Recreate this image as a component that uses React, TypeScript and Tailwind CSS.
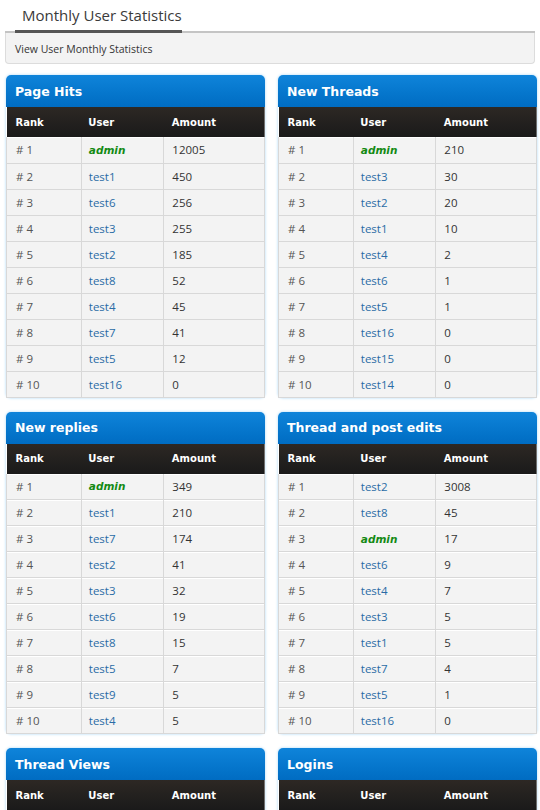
import React from "react";

type Row = { user: string; amount: number };

const stats: { title: string; rows: Row[] }[] = [
  {
    title: "Page Hits",
    rows: [
      { user: "admin", amount: 12005 },
      { user: "test1", amount: 450 },
      { user: "test6", amount: 256 },
      { user: "test3", amount: 255 },
      { user: "test2", amount: 185 },
      { user: "test8", amount: 52 },
      { user: "test4", amount: 45 },
      { user: "test7", amount: 41 },
      { user: "test5", amount: 12 },
      { user: "test16", amount: 0 },
    ],
  },
  {
    title: "New Threads",
    rows: [
      { user: "admin", amount: 210 },
      { user: "test3", amount: 30 },
      { user: "test2", amount: 20 },
      { user: "test1", amount: 10 },
      { user: "test4", amount: 2 },
      { user: "test6", amount: 1 },
      { user: "test5", amount: 1 },
      { user: "test16", amount: 0 },
      { user: "test15", amount: 0 },
      { user: "test14", amount: 0 },
    ],
  },
  {
    title: "New replies",
    rows: [
      { user: "admin", amount: 349 },
      { user: "test1", amount: 210 },
      { user: "test7", amount: 174 },
      { user: "test2", amount: 41 },
      { user: "test3", amount: 32 },
      { user: "test6", amount: 19 },
      { user: "test8", amount: 15 },
      { user: "test5", amount: 7 },
      { user: "test9", amount: 5 },
      { user: "test4", amount: 5 },
    ],
  },
  {
    title: "Thread and post edits",
    rows: [
      { user: "test2", amount: 3008 },
      { user: "test8", amount: 45 },
      { user: "admin", amount: 17 },
      { user: "test6", amount: 9 },
      { user: "test4", amount: 7 },
      { user: "test3", amount: 5 },
      { user: "test1", amount: 5 },
      { user: "test7", amount: 4 },
      { user: "test5", amount: 1 },
      { user: "test16", amount: 0 },
    ],
  },
  {
    title: "Thread Views",
    rows: [
      { user: "admin", amount: 1804 },
      { user: "test1", amount: 96 },
      { user: "test2", amount: 71 },
    ],
  },
  {
    title: "Logins",
    rows: [
      { user: "admin", amount: 62 },
      { user: "test1", amount: 14 },
      { user: "test3", amount: 9 },
    ],
  },
];

function StatPanel({ title, rows }: { title: string; rows: Row[] }) {
  return (
    <div className="rounded-[5px] shadow-[0_0_3px_#a9d6f7]">
      <div className="flex h-[32px] items-center rounded-t-[5px] bg-gradient-to-b from-[#0f84da] to-[#006cc2] px-[9px] pt-[2px] font-['DejaVu_Sans',sans-serif] text-[12.5px] font-bold text-white">
        {title}
      </div>
      <table className="w-full table-fixed border-collapse font-['Open_Sans',sans-serif] text-[11.5px] leading-[15px]">
        <thead>
          <tr className="h-[30px] bg-gradient-to-b from-[#2d2824] to-[#1a1a1a] text-left font-['DejaVu_Sans',sans-serif] text-[10px] font-bold text-white">
            <th className="w-[29%] pl-[9px]">Rank</th>
            <th className="w-[32%] pl-[7px]">User</th>
            <th className="w-[39%] pl-[8px]">Amount</th>
          </tr>
        </thead>
        <tbody className="bg-[#f3f3f3]">
          {rows.map((r, i) => (
            <tr key={i} className="h-[26px] border-b border-[#d8d8d8] shadow-[inset_0_1px_0_#fff]">
              <td className="border-l border-[#d8d8d8] pl-[9px] text-[#555]"># {i + 1}</td>
              <td className="border-l border-[#d8d8d8] pl-[7px]">
                {r.user === "admin" ? (
                  <span className="font-['DejaVu_Sans',sans-serif] text-[10.5px] font-bold italic text-[#138a13]">admin</span>
                ) : (
                  <span className="text-[#2a6ca6]">{r.user}</span>
                )}
              </td>
              <td className="border-x border-[#d8d8d8] pl-[8px] text-[#333]">{r.amount}</td>
            </tr>
          ))}
        </tbody>
      </table>
    </div>
  );
}

export default function App() {
  return (
    <div className="min-h-screen bg-white pb-4 font-['Open_Sans',sans-serif]">
      <div className="flex h-[30px] items-center pl-[22px] text-[15px] text-[#3a3a3a]">Monthly User Statistics</div>
      <div className="mx-[5px] flex items-end">
        <div className="h-[2px] w-[10px] bg-[#c4c4c4]" />
        <div className="h-[3px] w-[167px] bg-[#555]" />
        <div className="h-[2px] flex-1 bg-[#c4c4c4]" />
      </div>
      <div className="mx-[5px] flex h-[31px] items-center rounded-b-[4px] border-x border-b border-[#dcdcdc] bg-[#f3f3f3] pl-[9px] pt-[3px] text-[10.5px] text-[#333]">
        View User Monthly Statistics
      </div>
      <div className="mt-[11px] grid grid-cols-2 gap-x-[13px] gap-y-[14px] pl-[6px] pr-[3px]">
        {stats.map((s) => (
          <StatPanel key={s.title} title={s.title} rows={s.rows} />
        ))}
      </div>
    </div>
  );
}
